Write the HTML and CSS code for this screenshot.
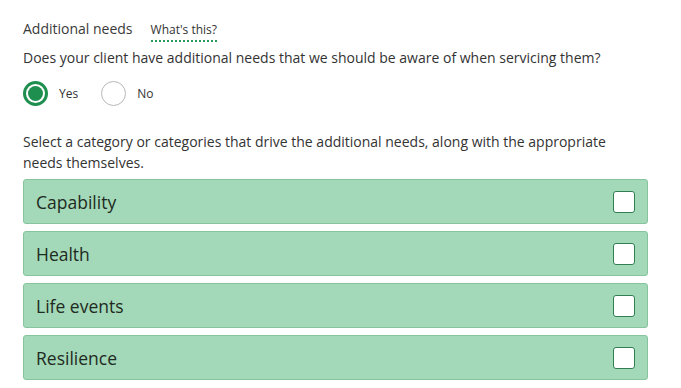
FILE: index.html
```html
<!DOCTYPE html>
<html>
<head>
<meta charset="utf-8">
<link rel="stylesheet" href="styles.css">
</head>
<body>
<div class="wrap">
  <div class="heading">
    <span class="title">Additional needs</span>
    <span class="help">What's this?</span>
  </div>
  <p class="question">Does your client have additional needs that we should be aware of when servicing them?</p>
  <div class="radios">
    <label class="radio"><span class="circle on"></span><span class="rlabel">Yes</span></label>
    <label class="radio"><span class="circle"></span><span class="rlabel">No</span></label>
  </div>
  <p class="intro">Select a category or categories that drive the additional needs, along with the appropriate needs themselves.</p>
  <div class="cards">
    <div class="card"><span class="cname">Capability</span><span class="check"></span></div>
    <div class="card"><span class="cname">Health</span><span class="check"></span></div>
    <div class="card"><span class="cname">Life events</span><span class="check"></span></div>
    <div class="card"><span class="cname">Resilience</span><span class="check"></span></div>
  </div>
</div>
</body>
</html>
```
FILE: styles.css
```css
html, body {
  margin: 0;
  padding: 0;
  background: #fff;
}
body {
  font-family: "Open Sans", "Noto Sans", sans-serif;
  color: #333;
}
.wrap {
  width: 625px;
  padding: 19px 0 0 23px;
}
.heading {
  display: flex;
  align-items: baseline;
  gap: 18px;
  height: 24px;
}
.title {
  font-size: 14px;
  color: #3a3a3a;
}
.help {
  font-size: 12px;
  color: #333;
  padding-bottom: 3px;
  border-bottom: 2px dotted #2a9a5c;
  line-height: 14px;
}
.question {
  margin: 4px 0 0;
  font-size: 14px;
  line-height: 22px;
}
.radios {
  display: flex;
  align-items: center;
  gap: 23px;
  margin-top: 11px;
  height: 26px;
}
.radio {
  display: flex;
  align-items: center;
  gap: 11px;
  font-size: 12px;
  color: #333;
}
.circle {
  box-sizing: border-box;
  width: 25px;
  height: 25px;
  border-radius: 50%;
  border: 1px solid #b8b8b8;
  background: #fff;
  position: relative;
}
.circle.on {
  border: 3px solid #1f8f4f;
}
.circle.on::after {
  content: "";
  position: absolute;
  left: 2px;
  top: 2px;
  width: 15px;
  height: 15px;
  border-radius: 50%;
  background: #1f8f4f;
}
.intro {
  margin: 25px 0 0;
  font-size: 14px;
  line-height: 21px;
}
.cards {
  display: flex;
  flex-direction: column;
  gap: 7px;
  margin-top: 6px;
}
.card {
  box-sizing: border-box;
  height: 45px;
  display: flex;
  align-items: center;
  justify-content: space-between;
  padding: 0 12px 0 12px;
  background: #a3d9b8;
  border: 1px solid #86c49e;
  border-radius: 3px;
}
.cname {
  font-size: 17.5px;
  color: #1e2a22;
}
.check {
  box-sizing: border-box;
  width: 22px;
  height: 22px;
  background: #fff;
  border: 1.5px solid #2f7f52;
  border-radius: 3px;
}
```
